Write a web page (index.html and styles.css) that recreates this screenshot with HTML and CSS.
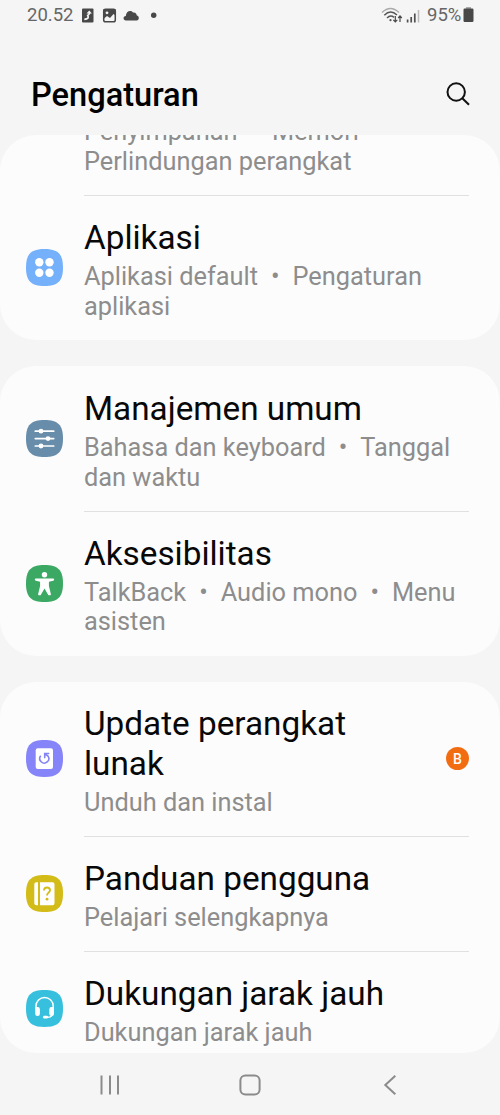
FILE: index.html
```html
<!DOCTYPE html>
<html lang="id">
<head>
<meta charset="utf-8">
<title>Pengaturan</title>
<link rel="stylesheet" href="styles.css">
</head>
<body>
<div class="screen">
  <div class="statusbar">
    <span class="clock">20.52</span>
    <svg class="notif" width="80" height="20" viewBox="0 0 80 20">
      <rect x="2" y="3.500" width="11.500" height="14" rx="1" fill="#484848"/>
      <path d="M4.300 14.300C8 14.300 9 12.500 7.700 10.500L10 8" fill="none" stroke="#f5f5f5" stroke-width="1.700"/>
      <path d="M6.500 8.500L9.300 5.500l2.600 3z" fill="#f5f5f5"/>
      <rect x="23.700" y="4.200" width="11.600" height="12.600" rx="1.800" fill="none" stroke="#484848" stroke-width="1.500"/>
      <path d="M23.500 4h12v6.500l-2-1.500-3.500 4-3-2-3.500 3z" fill="#484848"/>
      <circle cx="27" cy="7.800" r="1.400" fill="#f5f5f5"/>
      <path d="M46 18c-3.200 0-3.300-4-.2-4.400C46 9 50.500 7 53 10c2.200-.5 3.800 1 3.800 3 3 .5 2.400 5 0 5z" transform="translate(0 -2.500)" fill="#484848"/>
      <circle cx="73.700" cy="10.300" r="2.700" fill="#484848"/>
    </svg>
    <svg class="signal" width="40" height="20" viewBox="0 0 40 20">
      <g fill="none" stroke-width="1.500">
        <path d="M1 7.500Q9.500-.5 18 7.500" stroke="#aaa"/>
        <path d="M3.300 10.200Q9.500 4 16 10" stroke="#555"/>
        <path d="M6 13Q9.500 9.500 13 12.300" stroke="#555"/>
      </g>
      <circle cx="9.500" cy="15.200" r="1.100" fill="#555"/>
      <path d="M14.300 11v6M12.300 14.800l2 2 2-2M19 17v-6M17.200 13l1.800-2 1.800 2" fill="none" stroke="#484848" stroke-width="1.200"/>
      <path d="M26.600 14.500v3M30.200 12v5.500M33.800 8.500v9" stroke="#505050" stroke-width="1.700"/>
      <path d="M37.500 5v12.500" stroke="#bbb" stroke-width="1.500"/>
    </svg>
    <span class="percent">95%</span>
    <svg class="battery" width="11" height="16" viewBox="0 0 11 16">
      <path d="M3 0h5v2h-5z" fill="#aaa"/>
      <rect x=".5" y="1.500" width="10" height="13.500" rx="1.200" fill="#484848"/>
    </svg>
  </div>

  <header class="header">
    <h1 class="heading">Pengaturan</h1>
    <svg class="search" width="26" height="26" viewBox="0 0 26 26" fill="none" stroke="#111" stroke-width="2">
      <circle cx="11.200" cy="11" r="8.700"/>
      <path d="M17.300 17.200l6.700 6.600"/>
    </svg>
  </header>

  <main class="list">
    <section class="card card-first">
      <div class="row row-cut">
        <div class="text"><p class="sub">Penyimpanan<span class="dot">•</span>Memori<br>Perlindungan perangkat</p></div>
      </div>
      <div class="row">
        <svg class="icon" viewBox="0 0 37 37">
          <path class="tile blue" d="M18.500 0C32 0 37 5 37 18.500S32 37 18.500 37 0 32 0 18.500 5 0 18.500 0z"/>
          <g fill="#fff"><circle cx="13.300" cy="13.300" r="4.200"/><circle cx="23.500" cy="13.300" r="4.200"/><circle cx="13.300" cy="23.800" r="4.200"/><circle cx="23.500" cy="23.800" r="4.200"/></g>
        </svg>
        <div class="text"><h2 class="title">Aplikasi</h2><p class="sub">Aplikasi default<span class="dot">•</span>Pengaturan<br>aplikasi</p></div>
      </div>
    </section>

    <section class="card">
      <div class="row">
        <svg class="icon" viewBox="0 0 37 37">
          <path class="tile slate" d="M18.500 0C32 0 37 5 37 18.500S32 37 18.500 37 0 32 0 18.500 5 0 18.500 0z"/>
          <path d="M9.300 11.200h18.400M9.300 18.600h18.400M9.300 26h18.400" stroke="#fff" stroke-width="1.700" stroke-linecap="round"/>
          <g fill="#fff"><circle cx="15" cy="11.200" r="2.400"/><circle cx="22" cy="18.600" r="2.400"/><circle cx="15" cy="26" r="2.400"/></g>
        </svg>
        <div class="text"><h2 class="title">Manajemen umum</h2><p class="sub">Bahasa dan keyboard<span class="dot">•</span>Tanggal<br>dan waktu</p></div>
      </div>
      <div class="row">
        <svg class="icon" viewBox="0 0 37 37">
          <path class="tile green" d="M18.500 0C32 0 37 5 37 18.500S32 37 18.500 37 0 32 0 18.500 5 0 18.500 0z"/>
          <circle cx="18.500" cy="9.700" r="2.700" fill="#fff"/>
          <path d="M9.800 13.600h17.400q1 0 1 1t-1 1.100l-4.300 1v4.300l2 8.200q.1 1-.9 1h-1.600l-3.900-6.800-3.900 6.800h-1.600q-1 0-.9-1l2-8.200v-4.300l-4.300-1q-1-.1-1-1.100t1-1z" fill="#fff"/>
        </svg>
        <div class="text"><h2 class="title">Aksesibilitas</h2><p class="sub">TalkBack<span class="dot">•</span>Audio mono<span class="dot">•</span>Menu<br>asisten</p></div>
      </div>
    </section>

    <section class="card">
      <div class="row">
        <svg class="icon" viewBox="0 0 37 37">
          <path class="tile violet" d="M18.500 0C32 0 37 5 37 18.500S32 37 18.500 37 0 32 0 18.500 5 0 18.500 0z"/>
          <rect x="9.700" y="8.300" width="17.300" height="20.800" rx="2" fill="#fff"/>
          <path d="M14.700 15.800a4.500 4.500 0 1 0 7.300.2L19 14M23.300 13.500h-4.600v4.800" fill="none" stroke="#8584f5" stroke-width="1.600"/>
        </svg>
        <div class="text"><h2 class="title">Update perangkat<br>lunak</h2><p class="sub">Unduh dan instal</p></div>
        <span class="badge">B</span>
      </div>
      <div class="row">
        <svg class="icon" viewBox="0 0 37 37">
          <path class="tile yellow" d="M18.500 0C32 0 37 5 37 18.500S32 37 18.500 37 0 32 0 18.500 5 0 18.500 0z"/>
          <path d="M12 7.200v23h-1.700q-2 0-2-2v-19q0-2 2-2zM14 7.200h12.500q2 0 2 2v19q0 2-2 2H14z" fill="#fff"/>
          <path d="M18 15.500q.1-3 3-3t3 2.800c0 2.300-3 2.400-3 5.200" fill="none" stroke="#d3bc18" stroke-width="1.900"/>
          <circle cx="21" cy="24.200" r="1.400" fill="#d3bc18"/>
        </svg>
        <div class="text"><h2 class="title">Panduan pengguna</h2><p class="sub">Pelajari selengkapnya</p></div>
      </div>
      <div class="row">
        <svg class="icon" viewBox="0 0 37 37">
          <path class="tile cyan" d="M18.500 0C32 0 37 5 37 18.500S32 37 18.500 37 0 32 0 18.500 5 0 18.500 0z"/>
          <path d="M10 19v-3a8.600 8.600 0 0 1 17.200 0v3M26.300 24q-.5 3.300-4.500 3.300h-2.500" fill="none" stroke="#fff" stroke-width="1.500"/>
          <path d="M9.200 18q0-1 1-1h1.500q2.200 0 2.200 2.200v4.500q0 2.200-2.200 2.200-2.500 0-2.500-2.500zM28 18q0-1-1-1h-1.500q-2.200 0-2.200 2.200v4.500q0 2.200 2.200 2.200 2.500 0 2.500-2.500z" fill="#fff"/>
          <rect x="17" y="25.800" width="5" height="2.700" rx="1.300" fill="#fff"/>
        </svg>
        <div class="text"><h2 class="title">Dukungan jarak jauh</h2><p class="sub">Dukungan jarak jauh</p></div>
      </div>
    </section>
  </main>

  <nav class="navbar">
    <svg width="22" height="22" viewBox="0 0 22 22" fill="none" stroke="#8b8b8b" stroke-width="2"><path d="M2.500 1.500v19M11 1.500v19M19 1.500v19"/></svg>
    <svg width="22" height="22" viewBox="0 0 22 22" fill="none" stroke="#8b8b8b" stroke-width="2"><rect x="1.400" y="1.500" width="19.200" height="19" rx="5"/></svg>
    <svg width="22" height="22" viewBox="0 0 22 22" fill="none" stroke="#8b8b8b" stroke-width="2"><path d="M16.300 1.700L6.300 11l10 9.300"/></svg>
  </nav>
</div>
</body>
</html>
```
FILE: styles.css
```css
* { box-sizing: border-box; }
body { margin: 0; background: #f5f5f5; font-family: Roboto, sans-serif; }
h1, h2, p { margin: 0; font-weight: 400; }
svg { display: block; flex: none; }

.screen { display: flex; flex-direction: column; width: 500px; height: 1115px; overflow: hidden; }

.statusbar { display: flex; align-items: center; height: 30px; padding: 0 26px 0 27px; color: #666; font-size: 18.5px; }
.clock { width: 46px; }
.notif { margin-left: 7px; }
.signal { margin-left: auto; margin-right: 6px; }
.percent { width: 33px; }
.battery { margin-left: 3px; }

.header { display: flex; align-items: center; justify-content: space-between; height: 104.500px; padding: 23px 29px 0 31px; }
.heading { padding-top: 2px; font-size: 32.600px; font-weight: 500; line-height: 38px; color: #000; }

.list { height: 918.500px; overflow: hidden; border-radius: 36px; display: flex; flex-direction: column; gap: 26px; }
.card { flex: none; padding: 0 31px 0 26px; border-radius: 36px; background: #fcfcfc; }
.card-first { margin-top: -21.300px; }

.row { position: relative; display: flex; align-items: center; gap: 21px; padding: 22.800px 0 18.500px; }
.row-cut { padding: 4.200px 0 18.500px 58px; }
.row + .row::before { content: ""; position: absolute; top: 0; left: 58px; right: 0; height: 1px; background: #e0e0e0; }
.icon { width: 37px; height: 37px; margin-top: -4.300px; }
.text { flex: 1; white-space: nowrap; }
.title { margin-bottom: 4.600px; font-size: 33.300px; line-height: 39.500px; color: #080808; }
.sub { font-size: 25.350px; line-height: 29.700px; color: #8d8d8d; }
.dot { display: inline-block; width: 34.500px; text-align: center; line-height: 20px; }

.blue { fill: #75b0fb; }
.slate { fill: #688dab; }
.green { fill: #3ba963; }
.violet { fill: #8584f8; }
.yellow { fill: #d3bc18; }
.cyan { fill: #36c0de; }

.badge { display: flex; align-items: center; justify-content: center; width: 23px; height: 23px; margin-top: -4.300px; border-radius: 50%; background: #f26d12; color: #fff; font-size: 14px; font-weight: 500; }

.navbar { flex: 1; display: flex; justify-content: space-between; align-items: center; padding: 2px 99px 0; }
```
